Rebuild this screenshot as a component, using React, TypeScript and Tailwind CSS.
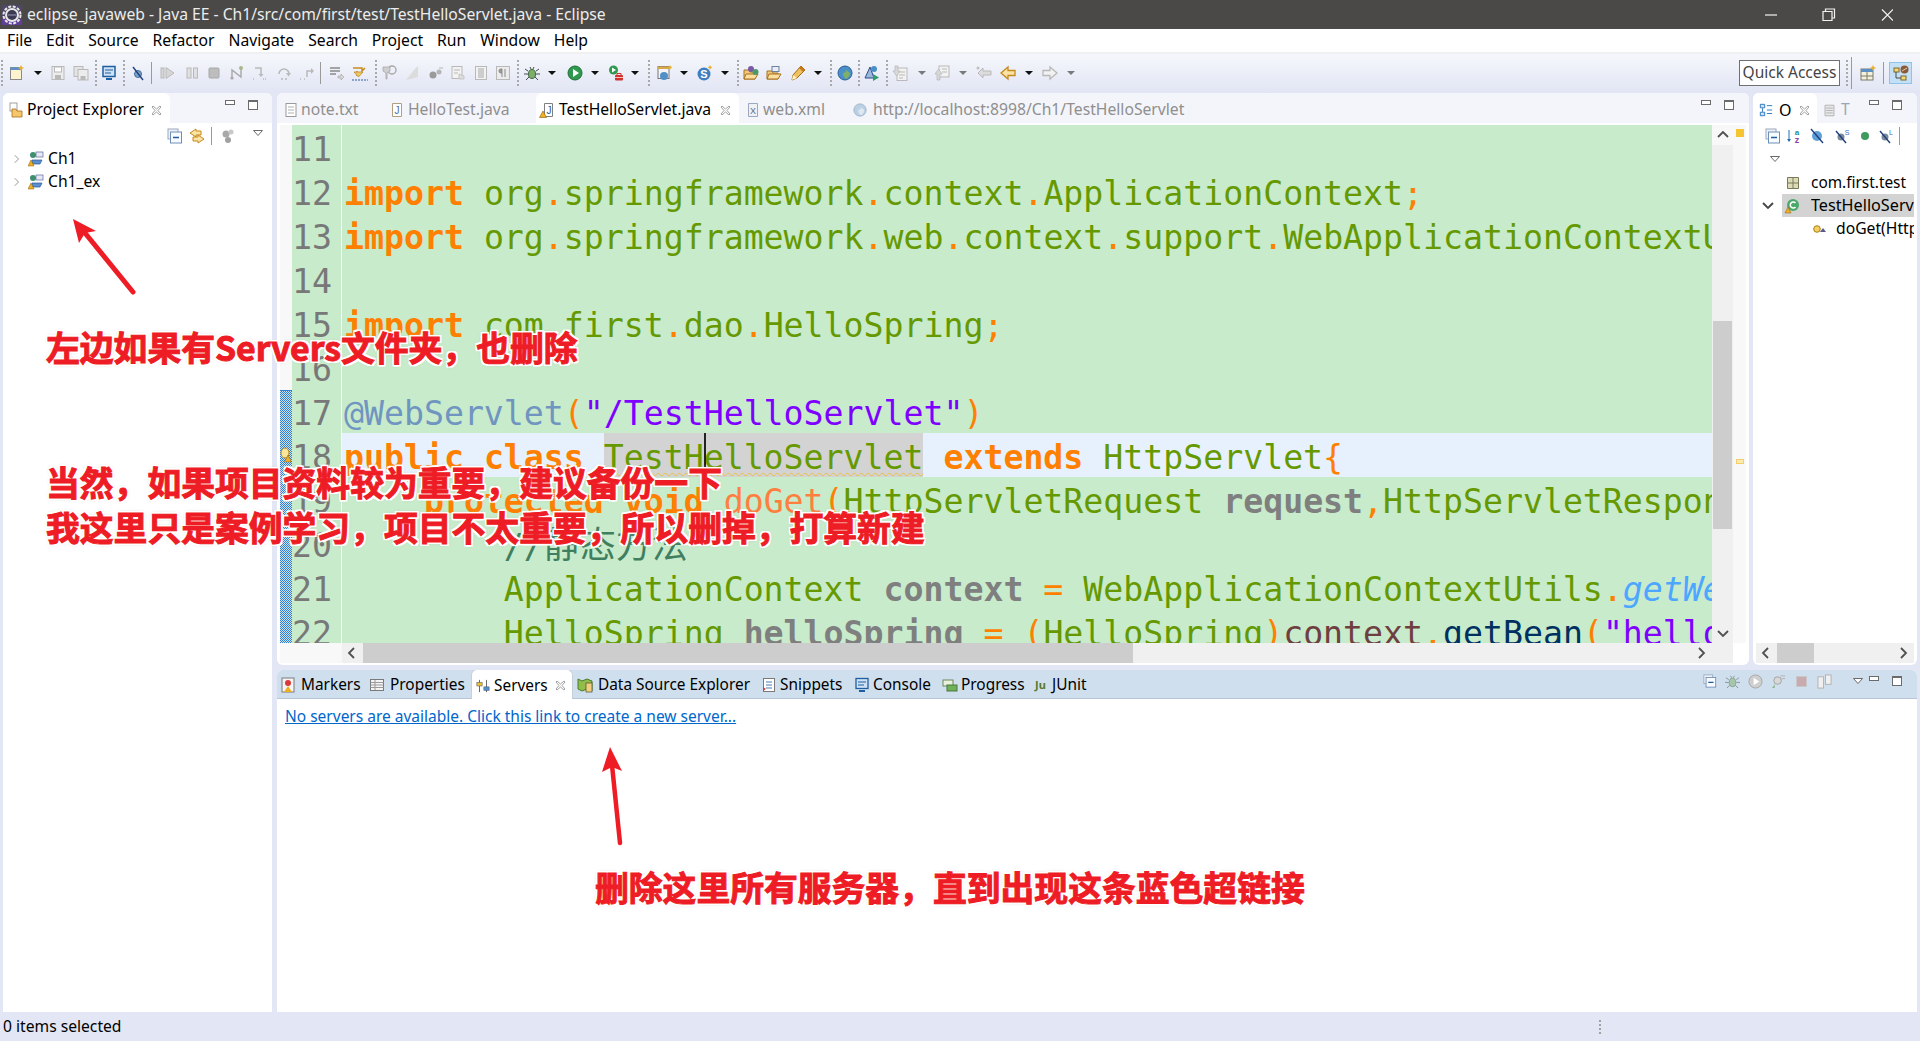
import React from "react";

const Ic = ({ className = "", children }: { className?: string; children: React.ReactNode }) => (
  <svg viewBox="0 0 16 16" className={"w-4 h-4 shrink-0 " + className}>
    {children}
  </svg>
);

const Arrow = ({ className = "", grey = false }: { className?: string; grey?: boolean }) => (
  <svg viewBox="0 0 8 4" className={"w-2 h-1 shrink-0 " + className}>
    <path d="M0 0h8L4 4z" fill={grey ? "#7a7a7a" : "#111"} />
  </svg>
);

const Grip = ({ className = "" }: { className?: string }) => (
  <div className={"w-[2px] h-[26px] shrink-0 border-l-2 border-dotted border-[#a9a9a9] " + className} />
);

const Sep = ({ className = "" }: { className?: string }) => (
  <div className={"w-px h-[22px] shrink-0 bg-[#9a9a9a] " + className} />
);

const G = "#b9b9b9";

// toolbar glyphs
const NewFile = ({ className }: { className?: string }) => (
  <Ic className={className}>
    <rect x="1.5" y="2.5" width="11" height="12" fill="#fdf3cf" stroke="#8a8a8a" />
    <rect x="1.5" y="2.5" width="11" height="2.5" fill="#5a8fc8" />
    <path d="M12 0l1 2 2 1-2 1-1 2-1-2-2-1 2-1z" fill="#e8b030" />
  </Ic>
);
const Save = ({ className }: { className?: string }) => (
  <Ic className={className}>
    <rect x="2" y="1.5" width="12" height="13" fill="#ececec" stroke={G} />
    <rect x="4.5" y="2" width="7" height="5" fill="#fff" stroke={G} />
    <rect x="5" y="10" width="6" height="4.5" fill={G} />
  </Ic>
);
const SaveAll = ({ className }: { className?: string }) => (
  <Ic className={className}>
    <rect x="1" y="1.5" width="9" height="10" fill="#e4e4e4" stroke={G} />
    <rect x="5" y="4.5" width="10" height="10.5" fill="#ececec" stroke={G} />
    <rect x="7.5" y="11" width="5" height="4" fill={G} />
  </Ic>
);
const Monitor = ({ className }: { className?: string }) => (
  <Ic className={className}>
    <rect x="2" y="1.5" width="12" height="10" fill="#cfe2f5" stroke="#1f5f9f" strokeWidth="1.5" />
    <path d="M4 5h8M4 8h6" stroke="#1f5f9f" />
    <path d="M5 14h6" stroke="#1f5f9f" strokeWidth="2" />
  </Ic>
);
const Skip = ({ className }: { className?: string }) => (
  <Ic className={className}>
    <circle cx="8" cy="9" r="3.5" fill="#7fa3c7" stroke="#3f6f9f" />
    <path d="M3 2l10 13" stroke="#1f3f7f" strokeWidth="1.4" />
  </Ic>
);
const Resume = ({ className }: { className?: string }) => (
  <Ic className={className}>
    <rect x="1" y="3" width="3" height="10" fill="#d6d6d6" stroke={G} />
    <path d="M6 2.5l8 5.5-8 5.5z" fill="#d6d6d6" stroke={G} />
  </Ic>
);
const Suspend = ({ className }: { className?: string }) => (
  <Ic className={className}>
    <rect x="3" y="3" width="4" height="10" fill="#e0e0e0" stroke={G} />
    <rect x="9.5" y="3" width="4" height="10" fill="#e0e0e0" stroke={G} />
  </Ic>
);
const Terminate = ({ className }: { className?: string }) => (
  <Ic className={className}>
    <rect x="3" y="3" width="10" height="10" rx="1" fill="#bdbdbd" stroke="#a8a8a8" />
  </Ic>
);
const Disconnect = ({ className }: { className?: string }) => (
  <Ic className={className}>
    <path d="M3 14V5l9 7V2" fill="none" stroke="#a8a8a8" strokeWidth="1.4" />
    <circle cx="3" cy="13" r="1.6" fill="#a8a8a8" />
    <circle cx="12" cy="3" r="2" fill="#a8b88a" />
  </Ic>
);
const StepA = ({ className }: { className?: string }) => (
  <Ic className={className}>
    <path d="M3 3h6v8" fill="none" stroke={G} strokeWidth="1.5" />
    <path d="M6.5 9h5l-2.5 3z" fill={G} />
    <path d="M1 14h2M11 14h3" stroke={G} strokeWidth="1.3" strokeDasharray="1 1" />
  </Ic>
);
const StepB = ({ className }: { className?: string }) => (
  <Ic className={className}>
    <path d="M3 9a5 5 0 0 1 10 0" fill="none" stroke={G} strokeWidth="1.6" />
    <path d="M10 8h5l-2.5 3.5z" fill={G} />
    <path d="M5 14h2M9 14h2" stroke={G} strokeWidth="1.3" />
  </Ic>
);
const StepC = ({ className }: { className?: string }) => (
  <Ic className={className}>
    <path d="M8 12V6h5" fill="none" stroke={G} strokeWidth="1.5" />
    <path d="M12 3v6l3-3z" fill={G} />
    <path d="M1 14h2M5 14h2" stroke={G} strokeWidth="1.3" strokeDasharray="1 1" />
  </Ic>
);
const UseFilter = ({ className }: { className?: string }) => (
  <Ic className={className}>
    <path d="M1 3h10M1 6h10M1 9h6" stroke="#8a8a8a" strokeWidth="1.3" />
    <path d="M9 11h3V9l3 3-3 3v-2H9z" fill="#d8d8d8" stroke="#a0a0a0" strokeWidth=".6" />
  </Ic>
);
const DropFrame = ({ className }: { className?: string }) => (
  <Ic className={className}>
    <path d="M1 3h9v3l3-3M5 6v5" fill="none" stroke="#c98a1c" strokeWidth="1.5" />
    <path d="M2 7h9l-4.500 5z" fill="#f0c66a" stroke="#b67f1c" strokeWidth=".7" />
    <path d="M0 15h16" stroke="#2f5f9f" strokeWidth="1.2" strokeDasharray="2 1" />
  </Ic>
);
const Pin = ({ className }: { className?: string }) => (
  <Ic className={className}>
    <circle cx="10" cy="5" r="4" fill="none" stroke="#a8a8a8" strokeWidth="1.4" />
    <path d="M1 2h7v4l-3 2v6H4V8L1 6z" fill="#cfcfcf" stroke="#a0a0a0" strokeWidth=".7" />
  </Ic>
);
const Brush = ({ className }: { className?: string }) => (
  <Ic className={className}>
    <path d="M2 15l8-10 4-4v11l-7 2z" fill="#dcdcdc" />
  </Ic>
);
const Beans = ({ className }: { className?: string }) => (
  <Ic className={className}>
    <circle cx="5" cy="10" r="3.500" fill="#9a9a9a" />
    <circle cx="11" cy="7" r="2.500" fill="#b5b5b5" />
    <path d="M11 3h4" stroke="#b5b5b5" />
  </Ic>
);
const NoteX = ({ className }: { className?: string }) => (
  <Ic className={className}>
    <rect x="2" y="1.500" width="10" height="12" fill="#f2f2f2" stroke={G} />
    <path d="M4 5h6M4 8h4" stroke={G} />
    <path d="M9 9l5 2v3H9z" fill="#dedede" stroke={G} strokeWidth=".7" />
  </Ic>
);
const Lines = ({ className }: { className?: string }) => (
  <Ic className={className}>
    <rect x="2.500" y="1.500" width="11" height="13" fill="#f2f2f2" stroke={G} />
    <path d="M5 4h6M5 6h6M5 8h6M5 10h6M5 12h6" stroke="#a8a8a8" />
  </Ic>
);
const Pilcrow = ({ className }: { className?: string }) => (
  <Ic className={className}>
    <rect x="1.500" y="1.500" width="13" height="13" fill="#ececec" stroke={G} />
    <path d="M7 4v8M10 4v8M7 4H6a2 2 0 0 0 0 4h1" fill="#9a9a9a" stroke="#8a8a8a" />
  </Ic>
);
const Bug = ({ className }: { className?: string }) => (
  <Ic className={className}>
    <ellipse cx="8" cy="9" rx="3.500" ry="4.500" fill="#7fae6a" stroke="#3f6a3f" />
    <path d="M1 4l3 2M15 4l-3 2M0 9h4M12 9h4M2 15l3-3M14 15l-3-3M6 2l1 2M10 2L9 4" stroke="#4a4a4a" />
  </Ic>
);
const Run = ({ className, faded = false }: { className?: string; faded?: boolean }) => (
  <Ic className={className}>
    <circle cx="8" cy="8" r="7" fill={faded ? "#cfcfcf" : "#2f9a4f"} stroke={faded ? "#a8a8a8" : "#1f6f3a"} />
    <path d="M6 4l6 4-6 4z" fill="#fff" />
  </Ic>
);
const ExtRun = ({ className }: { className?: string }) => (
  <Ic className={className}>
    <circle cx="5.500" cy="5" r="4.500" fill="#2f9a4f" />
    <path d="M4 2.500L8 5 4 7.500z" fill="#fff" />
    <rect x="7" y="10" width="8" height="5.500" rx="1" fill="#d0312d" />
    <path d="M9 10V8.500h4V10" fill="none" stroke="#d0312d" />
    <path d="M7 12.500h8" stroke="#fff" strokeWidth=".7" />
  </Ic>
);
const NewServer = ({ className }: { className?: string }) => (
  <Ic className={className}>
    <rect x="1" y="1.500" width="11" height="12" fill="#f5f5f5" stroke="#777" />
    <rect x="1" y="1.500" width="11" height="2.500" fill="#d8a84a" />
    <circle cx="7" cy="11" r="4" fill="#4f90c8" />
    <path d="M13 0l.8 1.600 1.600.8-1.600.8L13 5l-.8-1.800-1.600-.8 1.600-.8z" fill="#e8b030" />
  </Ic>
);
const NewS = ({ className }: { className?: string }) => (
  <Ic className={className}>
    <circle cx="7" cy="9" r="6.500" fill="#3f7fc0" />
    <text x="7" y="13" fontSize="11" textAnchor="middle" fontWeight="700" fill="#fff" fontFamily="Liberation Sans">
      S
    </text>
    <path d="M13 0l.8 1.600 1.600.8-1.600.8L13 5l-.8-1.800-1.600-.8 1.600-.8z" fill="#e8b030" />
  </Ic>
);
const OpenA = ({ className }: { className?: string }) => (
  <Ic className={className}>
    <path d="M1 14V5h5l1 2h5v7z" fill="#f2c77c" stroke="#a8701c" />
    <path d="M1 14l2-5h12l-3 5z" fill="#fbdf9f" stroke="#a8701c" />
    <circle cx="8" cy="4" r="3" fill="#7a5aa8" />
    <circle cx="12.500" cy="7" r="3" fill="#4a9a6a" />
  </Ic>
);
const OpenB = ({ className }: { className?: string }) => (
  <Ic className={className}>
    <path d="M1 14V6h5l1 2h5v6z" fill="#f2c77c" stroke="#a8701c" />
    <path d="M1 14l2-5h12l-3 5z" fill="#fbdf9f" stroke="#a8701c" />
    <rect x="6" y="1.500" width="7" height="5" fill="#e8eef6" stroke="#6f7f9f" />
  </Ic>
);
const Pencil = ({ className }: { className?: string }) => (
  <Ic className={className}>
    <path d="M11 1l4 4-8 8-5 2 1-5z" fill="#f0c060" stroke="#a06a14" />
    <path d="M2 15l1-5 4 3z" fill="#fff3d0" />
    <path d="M11 1l4 4-2 2-4-4z" fill="#c8791c" />
  </Ic>
);
const Globe = ({ className, faded = false }: { className?: string; faded?: boolean }) => (
  <Ic className={className}>
    <circle cx="8" cy="8" r="7" fill={faded ? "#bcd0e4" : "#4a8fc8"} stroke={faded ? "#9ab0c8" : "#2a5f98"} />
    <path d="M5 2c2 2 4 2 4 4s-3 1-3 3 2 4 3 5c2-1 4-3 4-6" fill={faded ? "#dfe8f0" : "#7fb06a"} />
  </Ic>
);
const Search = ({ className }: { className?: string }) => (
  <Ic className={className}>
    <path d="M6 2L1 13h9z" fill="#9ab8dc" stroke="#2a4f88" />
    <circle cx="10" cy="4" r="3" fill="#4a8fc8" />
    <path d="M9 9l6 3.500-6 3.500z" fill="#2f9a6a" />
  </Ic>
);
const NavDown = ({ className }: { className?: string }) => (
  <Ic className={className}>
    <rect x="5" y="3" width="10" height="12.500" fill="#f2f2f2" stroke={G} />
    <path d="M7 7h6M7 10h6M7 13h4" stroke={G} />
    <path d="M3 1h3v5h2L4.500 11 1 6h2z" fill="#d8d8d8" stroke="#b0b0b0" strokeWidth=".6" />
  </Ic>
);
const NavUp = ({ className }: { className?: string }) => (
  <Ic className={className}>
    <rect x="5" y="1" width="10" height="11" fill="#f2f2f2" stroke={G} />
    <path d="M8 4h5M8 7h5" stroke={G} />
    <path d="M3 15h3v-6h2L4.500 4 1 9h2z" fill="#d8d8d8" stroke="#b0b0b0" strokeWidth=".6" />
  </Ic>
);
const BackLast = ({ className }: { className?: string }) => (
  <Ic className={className}>
    <path d="M7 3L2 8l5 5v-3h8V6H7z" fill="#dcdcdc" stroke="#b8b8b8" />
    <circle cx="2" cy="3" r="1.500" fill="#c0c0c0" />
  </Ic>
);
const Back = ({ className }: { className?: string }) => (
  <Ic className={className}>
    <path d="M8 2L1 8l7 6v-3.500h7v-5H8z" fill="#fbe3a6" stroke="#c58a1c" strokeWidth="1.300" />
  </Ic>
);
const Forward = ({ className }: { className?: string }) => (
  <Ic className={className}>
    <path d="M8 2l7 6-7 6v-3.500H1v-5h7z" fill="#f2f2f2" stroke="#b8b8b8" strokeWidth="1.300" />
  </Ic>
);
const Perspective = ({ className }: { className?: string }) => (
  <Ic className={className}>
    <rect x="1" y="4" width="12" height="11" fill="#f4f0dc" stroke="#7a7a6a" />
    <rect x="1" y="4" width="12" height="3" fill="#5a8fc8" />
    <path d="M7 7v8M1 11h12" stroke="#7a7a6a" />
    <path d="M13 0l1 2 2 1-2 1-1 2-1-2-2-1 2-1z" fill="#e8b030" />
  </Ic>
);
const JavaEE = ({ className }: { className?: string }) => (
  <Ic className={className}>
    <rect x="1" y="3" width="5" height="4" fill="#f5d678" stroke="#7a6a2a" />
    <rect x="8" y="11" width="5" height="4" fill="#f5d678" stroke="#7a6a2a" />
    <path d="M3 7v6h5" fill="none" stroke="#4a4a4a" />
    <circle cx="11.500" cy="4.500" r="4" fill="#8a5a3a" />
    <path d="M9 6l5-3" stroke="#e8c8a8" />
  </Ic>
);

const ProjIcon = () => (
  <Ic>
    <circle cx="5" cy="4" r="3" fill="#3f8f6f" />
    <rect x="8" y="1" width="7" height="5" fill="#e8e8f4" stroke="#5a6a9a" strokeWidth=".7" />
    <path d="M4 9h10l-2 4H4z" fill="#5a8fd0" stroke="#2f5a98" strokeWidth=".7" />
    <path d="M3 9l3 6H0z" fill="#f0b020" stroke="#8a5a10" strokeWidth=".5" />
  </Ic>
);

const Folderish = () => (
  <Ic>
    <rect x="2" y="1" width="7" height="8" fill="#fff" stroke="#8a8a8a" strokeWidth=".8" />
    <path d="M4 7h4l1 2h5v6H4z" fill="#f5c66a" stroke="#a8701c" strokeWidth=".8" />
  </Ic>
);

const Close = ({ className = "" }: { className?: string }) => (
  <svg viewBox="0 0 11 11" className={"w-[11px] h-[11px] shrink-0 " + className}>
    <path d="M1 2l1-1 3.500 3L9 1l1 1-3 3.500 3 3.500-1 1-3.500-3L2 10 1 9l3-3.500z" fill="#fff" stroke="#8a8a8a" strokeWidth=".8" />
  </svg>
);

const MinMax = ({ className = "" }: { className?: string }) => (
  <div className={"flex items-start shrink-0 " + className}>
    <div className="w-[10px] h-[5px] border border-[#6b6b6b] bg-white" />
    <div className="ml-[13px] w-[10px] h-[10px] border border-[#6b6b6b] border-t-2 bg-white" />
  </div>
);

const MenuChevron = ({ className = "" }: { className?: string }) => (
  <svg viewBox="0 0 10 6" className={"w-[10px] h-[6px] shrink-0 " + className}>
    <path d="M.5.500h9L5 5.500z" fill="#fff" stroke="#6b6b6b" />
  </svg>
);

const CollapseAll = ({ className = "" }: { className?: string }) => (
  <Ic className={className}>
    <rect x="1" y="1" width="10" height="10" fill="#eef2f8" stroke="#9aa8c0" />
    <rect x="3.500" y="4" width="11" height="11" fill="#f8fbff" stroke="#6f8fb8" />
    <path d="M6 9.500h6" stroke="#1f5f9f" strokeWidth="1.500" />
  </Ic>
);

const LinkEditor = ({ className = "" }: { className?: string }) => (
  <Ic className={className}>
    <path d="M7 1L1 5l6 4V7h5V3H7z" fill="#fbe3a6" stroke="#c58a1c" />
    <path d="M9 7l6 4-6 4v-2H4V9h5z" fill="#fbe3a6" stroke="#c58a1c" />
  </Ic>
);

const kw = "font-bold text-[#ff7f00]";
const dot = "text-[#ff7f00]";
const pkg = "text-[#669900]";
const local = "font-bold text-[#7f7f7f]";

const Pk = ({ t }: { t: string }) => (
  <>
    {t.split(/([.;,(){}])/).map((s, i) =>
      /^[.;,(){}]$/.test(s) ? (
        <span key={i} className={dot}>
          {s}
        </span>
      ) : (
        <span key={i} className={pkg}>
          {s}
        </span>
      ),
    )}
  </>
);

const Line = ({ n, current = false, children }: { n: number; current?: boolean; children?: React.ReactNode }) => (
  <div className="flex h-[44px] leading-[49px]">
    <div className="w-[49px] shrink-0 bg-[#c7ebcb] text-[#787878] overflow-hidden">{n}</div>
    <div className="w-px shrink-0 bg-[#f4faf4]" />
    <div className={"flex-1 min-w-0 overflow-hidden whitespace-pre pl-[2px] " + (current ? "bg-[#e6f1fd]" : "bg-[#c7ebcb]")}>
      {children}
    </div>
  </div>
);

const Tab = ({
  icon,
  label,
  className,
  gap = "ml-[5px]",
}: {
  icon: React.ReactNode;
  label: string;
  className: string;
  gap?: string;
}) => (
  <div className={"flex items-center shrink-0 whitespace-nowrap " + className}>
    {icon}
    <span className={gap}>{label}</span>
  </div>
);

const ScrollArrow = ({ dir, className = "" }: { dir: "l" | "r" | "u" | "d"; className?: string }) => {
  const d = { l: "M8 2L3 7l5 5", r: "M4 2l5 5-5 5", u: "M2 9l5-5 5 5", d: "M2 5l5 5 5-5" }[dir];
  return (
    <svg viewBox="0 0 14 14" className={"w-[14px] h-[14px] shrink-0 " + className}>
      <path d={d} fill="none" stroke="#505050" strokeWidth="1.800" />
    </svg>
  );
};

const redText =
  "absolute whitespace-nowrap font-['Noto_Sans_CJK_SC',sans-serif] font-bold text-[33.8px] leading-[44px] text-[#ee1c25] [-webkit-text-stroke:1px_#ee1c25] [text-shadow:2px_0_0_#fff,-2px_0_0_#fff,0_2px_0_#fff,0_-2px_0_#fff,2px_2px_0_#fff,-2px_-2px_0_#fff,2px_-2px_0_#fff,-2px_2px_0_#fff,0_0_4px_#bbb]";

export default function App() {
  return (
    <div className="relative w-[1920px] h-[1041px] overflow-hidden flex flex-col bg-[#e3e7f5] font-['Noto_Sans',sans-serif] text-[15.7px] text-black">
      {/* title bar */}
      <div className="h-[29px] shrink-0 bg-[#4a4947] flex items-center text-[#ececec]">
        <svg viewBox="0 0 20 20" className="w-[20px] h-[20px] ml-[2px] shrink-0">
          <rect width="20" height="20" fill="#4f4668" />
          <rect y="14" width="20" height="6" fill="#5f3f98" />
          <circle cx="10" cy="10" r="8.500" fill="none" stroke="#e8e8e8" strokeWidth="2" strokeDasharray="3 1.500" />
          <circle cx="10" cy="10" r="7" fill="#e8e8e8" />
          <circle cx="10" cy="10" r="5" fill="#3c3a52" />
          <path d="M5.500 9h9v2h-9z" fill="#8a88a8" opacity=".6" />
        </svg>
        <span className="ml-[5px] whitespace-nowrap">
          eclipse_javaweb - Java EE - Ch1/src/com/first/test/TestHelloServlet.java - Eclipse
        </span>
        <svg viewBox="0 0 130 14" className="ml-auto mr-[27px] w-[130px] h-[14px] shrink-0">
          <path d="M2 7h12" stroke="#f2f2f2" strokeWidth="1.200" />
          <path d="M60 3.500h9v9h-9zM62.500 3.500V1h9v9h-2.500" fill="none" stroke="#f2f2f2" strokeWidth="1.200" />
          <path d="M119 1.500l11 11M130 1.500l-11 11" stroke="#f2f2f2" strokeWidth="1.200" />
        </svg>
      </div>

      {/* menu bar */}
      <div className="h-[23px] shrink-0 bg-white flex items-center gap-[14px] px-[7px]">
        <span>File</span>
        <span>Edit</span>
        <span>Source</span>
        <span>Refactor</span>
        <span>Navigate</span>
        <span>Search</span>
        <span>Project</span>
        <span>Run</span>
        <span>Window</span>
        <span>Help</span>
      </div>

      {/* toolbar */}
      <div className="h-[41px] shrink-0 border-t-2 border-[#f0f0f0] bg-gradient-to-b from-[#f6f7fc] to-[#e1e5f4] flex items-center pb-[2px]">
        <Grip className="ml-[1px]" />
        <NewFile className="ml-[6px]" />
        <Arrow className="ml-[9px]" />
        <Save className="ml-[8px]" />
        <SaveAll className="ml-[7px]" />
        <Grip className="ml-[6px]" />
        <Monitor className="ml-[4px]" />
        <Grip className="ml-[6px]" />
        <Skip className="ml-[5px]" />
        <Sep className="ml-[5px]" />
        <Resume className="ml-[8px]" />
        <Suspend className="ml-[8px]" />
        <Terminate className="ml-[6px]" />
        <Disconnect className="ml-[7px]" />
        <StepA className="ml-[7px]" />
        <StepB className="ml-[8px]" />
        <StepC className="ml-[7px]" />
        <Sep className="ml-[5px]" />
        <UseFilter className="ml-[8px]" />
        <DropFrame className="ml-[7px]" />
        <Grip className="ml-[7px]" />
        <Pin className="ml-[5px]" />
        <Brush className="ml-[6px]" />
        <Beans className="ml-[8px]" />
        <NoteX className="ml-[6px]" />
        <Lines className="ml-[7px]" />
        <Pilcrow className="ml-[6px]" />
        <Grip className="ml-[6px]" />
        <Bug className="ml-[5px]" />
        <Arrow className="ml-[8px]" />
        <Run className="ml-[11px]" />
        <Arrow className="ml-[8px]" />
        <ExtRun className="ml-[9px]" />
        <Arrow className="ml-[7px]" />
        <Grip className="ml-[9px]" />
        <NewServer className="ml-[7px]" />
        <Arrow className="ml-[7px]" />
        <NewS className="ml-[9px]" />
        <Arrow className="ml-[8px]" />
        <Grip className="ml-[8px]" />
        <OpenA className="ml-[4px]" />
        <OpenB className="ml-[7px]" />
        <Pencil className="ml-[8px]" />
        <Arrow className="ml-[8px]" />
        <Grip className="ml-[8px]" />
        <Globe className="ml-[5px]" />
        <Grip className="ml-[5px]" />
        <Search className="ml-[4px]" />
        <Grip className="ml-[6px]" />
        <NavDown className="ml-[4px]" />
        <Arrow grey className="ml-[10px]" />
        <NavUp className="ml-[8px]" />
        <Arrow grey className="ml-[9px]" />
        <BackLast className="ml-[9px]" />
        <Back className="ml-[8px]" />
        <Arrow className="ml-[9px]" />
        <Forward className="ml-[9px]" />
        <Arrow grey className="ml-[9px]" />

        <div className="ml-auto w-[101px] h-[26px] shrink-0 border border-[#707070] bg-white flex items-center justify-center text-[15.5px] text-[#444] whitespace-nowrap">
          Quick Access
        </div>
        <Grip className="ml-[6px]" />
        <Sep className="ml-[3px] h-[32px]" />
        <Perspective className="ml-[8px]" />
        <Sep className="ml-[7px]" />
        <div className="ml-[5px] mr-[8px] w-[23px] h-[22px] shrink-0 bg-[#c4e0f6] border border-[#8fc3ea] flex items-center justify-center">
          <JavaEE />
        </div>
      </div>

      {/* workbench */}
      <div className="flex-1 min-h-0 flex pl-[3px] pr-[3px] gap-[5px]">
        {/* project explorer */}
        <div className="w-[269px] shrink-0 bg-white rounded-t-[6px] flex flex-col overflow-hidden">
          <div className="h-[30px] shrink-0 pt-[4px] bg-[#f4f5fb] flex items-center">
            <div className="w-[167px] h-[30px] -mt-[4px] pt-[4px] shrink-0 bg-white rounded-tr-[6px] flex items-center pl-[5px] whitespace-nowrap">
              <Folderish />
              <span className="ml-[3px] w-[124px] shrink-0">Project Explorer</span>
              <Close />
            </div>
            <MinMax className="ml-[55px] -mt-[10px]" />
          </div>
          <div className="h-[26px] shrink-0 flex items-center">
            <CollapseAll className="ml-[164px]" />
            <LinkEditor className="ml-[6px]" />
            <div className="ml-[6px] w-px h-[18px] bg-[#9a9a9a]" />
            <Ic className="ml-[9px]">
              <circle cx="5" cy="6" r="3.500" fill="#a8a8a8" />
              <circle cx="10" cy="4" r="2.500" fill="#c8c8c8" />
              <circle cx="7" cy="12" r="3" fill="#a0a0a0" />
            </Ic>
            <MenuChevron className="ml-[16px] -mt-[6px]" />
          </div>
          <div className="flex items-center h-[23px] pl-[11px] mt-[-2px]">
            <svg viewBox="0 0 8 12" className="w-[6px] h-[10px]">
              <path d="M1 1l5 5-5 5" fill="none" stroke="#8a8a8a" strokeWidth="1.200" />
            </svg>
            <span className="ml-[8px]"><ProjIcon /></span>
            <span className="ml-[4px]">Ch1</span>
          </div>
          <div className="flex items-center h-[23px] pl-[11px]">
            <svg viewBox="0 0 8 12" className="w-[6px] h-[10px]">
              <path d="M1 1l5 5-5 5" fill="none" stroke="#8a8a8a" strokeWidth="1.200" />
            </svg>
            <span className="ml-[8px]"><ProjIcon /></span>
            <span className="ml-[4px]">Ch1_ex</span>
          </div>
        </div>

        {/* right column */}
        <div className="flex-1 min-w-0 flex flex-col gap-[5px]">
          <div className="h-[572px] shrink-0 flex gap-[4px]">
            {/* editor */}
            <div className="w-[1472px] shrink-0 bg-white rounded-t-[6px] rounded-b-[6px] flex flex-col overflow-hidden">
              <div className="h-[30px] shrink-0 pt-[4px] bg-[#f4f5fb] flex items-center text-[#8f8f8f]">
                <Ic className="ml-[6px]">
                  <rect x="3" y="1.500" width="10" height="13" fill="#fff" stroke="#9a9a9a" />
                  <path d="M5 5h6M5 8h6M5 11h6" stroke="#b0b0b0" />
                </Ic>
                <span className="ml-[2px] w-[88px] shrink-0">note.txt</span>
                <Ic>
                  <path d="M3.500 1.500h9v13h-9z" fill="#fff" stroke="#b0a080" />
                  <text x="8" y="12" fontSize="10" textAnchor="middle" fill="#4a70a0" fontFamily="Liberation Sans">J</text>
                </Ic>
                <span className="ml-[3px] w-[128px] shrink-0">HelloTest.java</span>
                <div className="w-[203px] h-[30px] -mt-[4px] pt-[4px] shrink-0 bg-white rounded-t-[6px] flex items-center pl-[3px] text-black whitespace-nowrap">
                  <Ic>
                    <path d="M5.500 1.500h8v13h-8z" fill="#fff" stroke="#7f7f7f" />
                    <text x="10" y="12" fontSize="10" textAnchor="middle" fill="#2f5a98" fontFamily="Liberation Sans">J</text>
                    <path d="M4 9l3.500 6.500H.5z" fill="#f0b020" stroke="#8a5a10" strokeWidth=".6" />
                  </Ic>
                  <span className="ml-[4px] w-[161px] shrink-0">TestHelloServlet.java</span>
                  <Close />
                </div>
                <Ic className="ml-[6px]">
                  <path d="M3.500 1.500h9v13h-9z" fill="#eef1f6" stroke="#9aa8c0" />
                  <text x="8" y="12" fontSize="9" textAnchor="middle" fill="#5a6f8f" fontFamily="Liberation Sans">X</text>
                </Ic>
                <span className="ml-[2px] w-[90px] shrink-0">web.xml</span>
                <Globe faded className="w-[14px] h-[14px]" />
                <span className="ml-[6px] whitespace-nowrap">http://localhost:8998/Ch1/TestHelloServlet</span>
                <MinMax className="ml-auto mr-[15px] -mt-[10px]" />
              </div>
              <div className="h-[2px] shrink-0" />

              <div className="h-[518px] shrink-0 flex">
                <div className="w-[3px] shrink-0" />
                {/* annotation ruler */}
                <div className="relative w-[12px] shrink-0 bg-[#f8f8f8]">
                  <div className="absolute left-0 right-0 top-[265px] bottom-0 border-t border-[#2f7fd0] bg-[repeating-conic-gradient(#2f7fd0_0_25%,#cfe3f6_0_50%)] bg-[length:2px_2px]" />
                  <svg viewBox="0 0 12 16" className="absolute left-0 top-[322px] w-[12px] h-[16px]">
                    <ellipse cx="5" cy="6" rx="4" ry="5" fill="#fbe59a" stroke="#b58a1c" />
                    <path d="M8 8l3.500 7h-7z" fill="#f0b020" stroke="#8a5a10" strokeWidth=".5" />
                  </svg>
                </div>
                {/* code */}
                <div className="w-[1420px] shrink-0 overflow-hidden font-['DejaVu_Sans_Mono','Noto_Sans_CJK_SC',monospace] text-[33.2px]">
                  <Line n={11} />
                  <Line n={12}>
                    <span className={kw}>import</span> <Pk t="org.springframework.context.ApplicationContext;" />
                  </Line>
                  <Line n={13}>
                    <span className={kw}>import</span> <Pk t="org.springframework.web.context.support.WebApplicationContextUtils;" />
                  </Line>
                  <Line n={14} />
                  <Line n={15}>
                    <span className={kw}>import</span> <Pk t="com.first.dao.HelloSpring;" />
                  </Line>
                  <Line n={16} />
                  <Line n={17}>
                    <span className="text-[#6f95c0]">@WebServlet</span>
                    <span className={dot}>(</span>
                    <span className="text-[#8000ff]">"/TestHelloServlet"</span>
                    <span className={dot}>)</span>
                  </Line>
                  <Line n={18} current>
                    <span className={kw}>public</span> <span className={kw}>class</span>{" "}
                    <span className="relative inline-block h-[44px] align-top bg-[#d3d3d3] underline decoration-wavy decoration-1 underline-offset-[3px] decoration-[#e8c040]">
                      <span className={pkg}>TestHelloServlet</span>
                      <span className="absolute left-[100px] top-0 w-[2px] h-[44px] bg-[#222]" />
                    </span>{" "}
                    <span className={kw}>extends</span> <Pk t="HttpServlet{" />
                  </Line>
                  <Line n={19}>
                    {"    "}
                    <span className={kw}>protected</span> <span className={kw}>void</span>{" "}
                    <span className="text-[#ff7f3f]">doGet</span>
                    <Pk t="(HttpServletRequest " />
                    <span className={local}>request</span>
                    <Pk t=",HttpServletResponse" />
                  </Line>
                  <Line n={20}>
                    {"        "}
                    <span className="text-[#3f7f5f]">
                      //<span className="text-[36px]">静态方法</span>
                    </span>
                  </Line>
                  <Line n={21}>
                    {"        "}
                    <span className={pkg}>ApplicationContext</span> <span className={local}>context</span>{" "}
                    <span className={dot}>=</span> <Pk t="WebApplicationContextUtils." />
                    <span className="italic text-[#4da6ff]">getWebApplicationContext</span>
                  </Line>
                  <Line n={22}>
                    {"        "}
                    <span className={pkg}>HelloSpring</span> <span className={local}>helloSpring</span>{" "}
                    <span className={dot}>=</span> <span className={dot}>(</span>
                    <span className={pkg}>HelloSpring</span>
                    <span className={dot}>)</span>
                    <span className="text-[#6f3f3f]">context</span>
                    <span className={dot}>.</span>
                    <span className="text-[#003060]">getBean</span>
                    <span className={dot}>(</span>
                    <span className="text-[#8000ff]">"hello"</span>
                  </Line>
                </div>
                {/* vertical scrollbar */}
                <div className="w-[21px] shrink-0 bg-[#f0f0f0] flex flex-col">
                  <div className="h-[20px] shrink-0 flex items-center justify-center bg-[#f8f8f8]">
                    <ScrollArrow dir="u" />
                  </div>
                  <div className="flex-1 min-h-0 pt-[176px] pb-[94px] px-[1px]">
                    <div className="h-full bg-[#cdcdcd]" />
                  </div>
                  <div className="h-[20px] shrink-0 flex items-center justify-center">
                    <ScrollArrow dir="d" />
                  </div>
                </div>
                {/* overview ruler */}
                <div className="w-[13px] shrink-0 flex flex-col items-center bg-[#f8f8f8] pt-[4px]">
                  <div className="w-[8px] h-[8px] bg-[#f5c430]" />
                  <div className="w-[8px] h-[5px] mt-[322px] bg-[#fcecb0] border border-[#f2cf6a]" />
                </div>
              </div>

              {/* horizontal scrollbar */}
              <div className="h-[20px] shrink-0 flex items-center">
                <div className="w-[3px]" />
                <div className="w-[62px] h-[20px] shrink-0 bg-[#f8f8f8]" />
                <div className="w-[21px] h-[20px] shrink-0 bg-[#f0f0f0] flex items-center justify-center">
                  <ScrollArrow dir="l" />
                </div>
                <div className="w-[770px] h-[20px] shrink-0 bg-[#cdcdcd]" />
                <div className="w-[558px] h-[20px] shrink-0 bg-[#f0f0f0]" />
                <div className="w-[21px] h-[20px] shrink-0 bg-[#f0f0f0] flex items-center justify-center">
                  <ScrollArrow dir="r" />
                </div>
                <div className="w-[21px] h-[20px] shrink-0 bg-[#f0f0f0]" />
              </div>
            </div>

            {/* outline */}
            <div className="flex-1 min-w-0 bg-white rounded-t-[6px] rounded-b-[6px] flex flex-col overflow-hidden">
              <div className="h-[30px] shrink-0 pt-[4px] bg-[#f4f5fb] flex items-center">
                <div className="w-[64px] h-[30px] -mt-[4px] pt-[4px] shrink-0 bg-white rounded-tr-[6px] flex items-center pl-[6px] text-[16px]">
                  <Ic className="w-[14px] h-[14px]">
                    <path d="M1.500 1.500h5v4h-5zM1.500 10.500h5v4h-5z" fill="#cfe2f5" stroke="#1f6fb8" />
                    <path d="M9 3h6M9 8h6M9 12h6M4 6v4" stroke="#1f6fb8" />
                  </Ic>
                  <span className="ml-[6px] w-[14px] shrink-0">O</span>
                  <Close className="ml-[6px]" />
                </div>
                <Ic className="ml-[6px] w-[13px] h-[13px]">
                  <path d="M2.500 1.500h11v13h-11z" fill="#e8e8e8" stroke="#a8a8a8" />
                  <path d="M4 5h8M4 8h8M4 11h8" stroke="#a8a8a8" />
                </Ic>
                <span className="ml-[5px] text-[#9aa6b4]">T</span>
                <MinMax className="ml-auto mr-[15px] -mt-[10px]" />
              </div>
              <div className="h-[26px] shrink-0 flex items-center">
                <CollapseAll className="ml-[12px]" />
                <Ic className="ml-[6px]">
                  <path d="M2 2v11" stroke="#1f6fb8" />
                  <path d="M0 11l2 3 2-3z" fill="#1f6fb8" />
                  <text x="10" y="7" fontSize="8" fontWeight="700" textAnchor="middle" fill="#1f8f8f" fontFamily="Liberation Sans">a</text>
                  <text x="10" y="15" fontSize="9" fontWeight="700" textAnchor="middle" fill="#8f3f9f" fontFamily="Liberation Sans">z</text>
                </Ic>
                <Ic className="ml-[6px]">
                  <circle cx="8" cy="8" r="5" fill="#5fa0d8" />
                  <path d="M2 1l12 14" stroke="#1f3f7f" strokeWidth="1.400" />
                </Ic>
                <Ic className="ml-[9px]">
                  <circle cx="7" cy="9" r="3.500" fill="#7a8a9a" />
                  <path d="M2 3l10 12" stroke="#1f3f7f" strokeWidth="1.400" />
                  <text x="13" y="7" fontSize="7" textAnchor="middle" fill="#3f6fb8" fontFamily="Liberation Sans">S</text>
                </Ic>
                <Ic className="ml-[7px]">
                  <circle cx="8" cy="8" r="4" fill="#3f9a5f" />
                </Ic>
                <Ic className="ml-[5px]">
                  <circle cx="7" cy="9" r="3.500" fill="#7a8a9a" />
                  <path d="M2 3l10 12" stroke="#1f3f7f" strokeWidth="1.400" />
                  <text x="13" y="7" fontSize="7" textAnchor="middle" fill="#3f6fb8" fontFamily="Liberation Sans">L</text>
                </Ic>
                <div className="ml-[5px] w-px h-[18px] bg-[#9a9a9a]" />
              </div>
              <div className="h-[16px] shrink-0 pl-[17px] mt-[2px] flex items-center">
                <MenuChevron />
              </div>
              <div className="h-[23px] shrink-0 flex items-center mt-[4px] whitespace-nowrap overflow-hidden">
                <svg viewBox="0 0 14 14" className="ml-[33px] w-[14px] h-[14px] shrink-0">
                  <path d="M1.500 1.500h11v11h-11zM7 1.500v11M1.500 7h11" fill="#dcdcb8" stroke="#7a7a5a" />
                </svg>
                <span className="ml-[11px] text-[15.4px]">com.first.test</span>
              </div>
              <div className="h-[23px] shrink-0 flex items-center whitespace-nowrap overflow-hidden">
                <svg viewBox="0 0 12 8" className="ml-[9px] w-[12px] h-[8px] shrink-0">
                  <path d="M1 1l5 5 5-5" fill="none" stroke="#444" strokeWidth="1.800" />
                </svg>
                <div className="ml-[8px] w-[132px] h-[23px] shrink-0 bg-[#d3d3d3] flex items-center overflow-hidden">
                  <svg viewBox="0 0 16 16" className="ml-[2px] w-[16px] h-[16px] shrink-0">
                    <circle cx="9" cy="7" r="6" fill="#4aa86a" />
                    <path d="M11.500 5a3 3 0 1 0 0 4" fill="none" stroke="#fff" strokeWidth="1.500" />
                    <path d="M4 9l3 6H1z" fill="#f0b020" stroke="#8a5a10" strokeWidth=".5" />
                  </svg>
                  <span className="ml-[11px] w-[103px] shrink-0 overflow-hidden text-[16.2px]">TestHelloServlet</span>
                </div>
              </div>
              <div className="h-[23px] shrink-0 flex items-center whitespace-nowrap overflow-hidden">
                <svg viewBox="0 0 14 8" className="ml-[60px] w-[14px] h-[8px] shrink-0">
                  <circle cx="4" cy="4" r="3.300" fill="#f5d060" stroke="#a8801c" />
                  <path d="M10 3l3 4H7z" fill="#5a5a8a" />
                </svg>
                <span className="ml-[9px] w-[78px] overflow-hidden">doGet(HttpServletRequest</span>
              </div>
              <div className="flex-1" />
              <div className="h-[20px] shrink-0 mb-[2px] mx-[3px] bg-[#f0f0f0] flex items-center">
                <div className="w-[21px] flex justify-center shrink-0">
                  <ScrollArrow dir="l" />
                </div>
                <div className="w-[37px] h-[20px] shrink-0 bg-[#cdcdcd]" />
                <div className="ml-auto w-[21px] flex justify-center shrink-0">
                  <ScrollArrow dir="r" />
                </div>
              </div>
            </div>
          </div>

          {/* bottom panel */}
          <div className="flex-1 min-h-0 bg-white rounded-t-[6px] flex flex-col overflow-hidden">
            <div className="h-[29px] shrink-0 pt-[2px] bg-[#cfdfee] border-b border-[#b8c4d8] flex items-center text-[15.4px]">
              <Tab
                className="w-[89px] ml-[3px]"
                label="Markers"
                icon={
                  <Ic>
                    <rect x="2" y="1" width="12" height="14" fill="#f4f4f4" stroke="#7a7a7a" />
                    <circle cx="8" cy="6" r="3" fill="#d83a3a" />
                    <path d="M8 9l4 6H4z" fill="#f0b020" />
                  </Ic>
                }
              />
              <Tab
                className="w-[102px]"
                label="Properties"
                icon={
                  <Ic>
                    <rect x="1.500" y="2.500" width="13" height="11" fill="#f4f4f4" stroke="#7a7a7a" />
                    <path d="M1.500 5.500h13M1.500 8h13M1.500 10.500h13M6 3v10" stroke="#9a9a9a" />
                  </Ic>
                }
              />
              <div className="relative w-[102px] h-[30px] -mt-[2px] pt-[2px] shrink-0 bg-white rounded-t-[6px] border border-b-0 border-[#c8d0dc] flex items-center pl-[4px] whitespace-nowrap">
                <Ic className="w-[14px] h-[14px]">
                  <path d="M4 1v14M12 1v14" stroke="#555" />
                  <rect x="1" y="4" width="6" height="4" fill="#e8c030" stroke="#555" strokeWidth=".6" />
                  <rect x="9" y="9" width="6" height="4" fill="#4f90d0" stroke="#555" strokeWidth=".6" />
                </Ic>
                <span className="ml-[4px] w-[61px] shrink-0">Servers</span>
                <Close />
              </div>
              <Tab
                className="w-[184px] ml-[4px]"
                label="Data Source Explorer"
                icon={
                  <Ic>
                    <path d="M1 2l4 2 5-2 5 2v10l-5-2-5 2-4-2z" fill="#8fbf4a" stroke="#4a7a2a" />
                    <rect x="9" y="6" width="6" height="9" fill="#f0d080" stroke="#4a4a2a" strokeWidth=".7" />
                  </Ic>
                }
              />
              <Tab
                className="w-[93px]"
                gap="ml-[3px]"
                label="Snippets"
                icon={
                  <Ic>
                    <rect x="2.500" y="1.500" width="11" height="13" fill="#fff" stroke="#7a7a7a" />
                    <path d="M5 5h6M5 8h6M5 11h6" stroke="#4a7ab8" />
                    <path d="M2 10l3 2-3 2z" fill="#d83a3a" />
                  </Ic>
                }
              />
              <Tab
                className="w-[88px]"
                gap="ml-[3px]"
                label="Console"
                icon={
                  <Ic>
                    <rect x="2" y="1.500" width="12" height="10" fill="#cfe2f5" stroke="#1f5f9f" strokeWidth="1.300" />
                    <path d="M4 5h8M4 8h6" stroke="#1f5f9f" />
                    <path d="M5 14h6" stroke="#1f5f9f" strokeWidth="2" />
                  </Ic>
                }
              />
              <Tab
                className="w-[93px]"
                gap="ml-[3px]"
                label="Progress"
                icon={
                  <Ic>
                    <rect x="1" y="3" width="10" height="6" fill="#e8f0e0" stroke="#6a8a5a" />
                    <rect x="5" y="8" width="10" height="6" fill="#6fb05a" stroke="#4a7a3a" />
                  </Ic>
                }
              />
              <div className="flex items-center shrink-0">
                <span className="w-[15px] text-[11px] font-bold text-[#5a7a2a]">Ju</span>
                <span className="ml-[2px]">JUnit</span>
              </div>
              <div className="ml-auto flex items-center -mt-[8px] mr-[15px]">
                <CollapseAll className="w-[14px] h-[14px]" />
                <Bug className="ml-[8px] opacity-50 w-[15px] h-[15px]" />
                <Run faded className="ml-[8px] w-[15px] h-[15px]" />
                <Ic className="ml-[8px] w-[15px] h-[15px]">
                  <circle cx="7" cy="7" r="4" fill="#d8d8d8" stroke="#a0a0a0" />
                  <path d="M1 15l3-4v4z" fill="#8fb88f" />
                  <path d="M10 2h5M11 5h4" stroke="#b0b0b0" />
                </Ic>
                <div className="ml-[10px] w-[11px] h-[11px] bg-[#c9aab0] border border-[#c8c8c8]" />
                <Ic className="ml-[10px] w-[15px] h-[15px]">
                  <rect x="1" y="3" width="6" height="12" fill="#f0f0f0" stroke="#b0b0b0" />
                  <rect x="9" y="1" width="6" height="10" fill="#f0f0f0" stroke="#b0b0b0" />
                </Ic>
                <MenuChevron className="ml-[21px]" />
                <MinMax className="ml-[6px]" />
              </div>
            </div>
            <div className="pl-[8px] pt-[6px]">
              <a className="text-[#0066cc] underline text-[15.5px] whitespace-nowrap">
                No servers are available. Click this link to create a new server...
              </a>
            </div>
          </div>
        </div>
      </div>

      {/* status bar */}
      <div className="h-[29px] shrink-0 flex items-center pl-[3px] text-[15.65px]">
        <span>0 items selected</span>
        <div className="ml-auto mr-[319px] h-[14px] border-l-2 border-dotted border-[#a0a0a0]" />
      </div>

      {/* red notes pasted over the screenshot */}
      <div className={redText + " left-[46px] top-[325px]"}>左边如果有Servers文件夹，也删除</div>
      <div className={redText + " left-[46px] top-[460px]"}>当然，如果项目资料较为重要，建议备份一下</div>
      <div className={redText + " left-[46px] top-[505px]"}>我这里只是案例学习，项目不太重要，所以删掉，打算新建</div>
      <div className={redText + " left-[595px] top-[865px]"}>删除这里所有服务器，直到出现这条蓝色超链接</div>
      <svg viewBox="0 0 1920 1041" className="absolute inset-0 w-[1920px] h-[1041px] pointer-events-none">
        <path d="M73 219l23 12-11 2-6 10z" fill="#ee1c25" />
        <path d="M85 233l48 59" fill="none" stroke="#ee1c25" strokeWidth="5" strokeLinecap="round" />
        <path d="M610 747l12 24-10-4-10 5z" fill="#ee1c25" />
        <path d="M612 765l8 78" fill="none" stroke="#ee1c25" strokeWidth="4.500" strokeLinecap="round" />
      </svg>
    </div>
  );
}
